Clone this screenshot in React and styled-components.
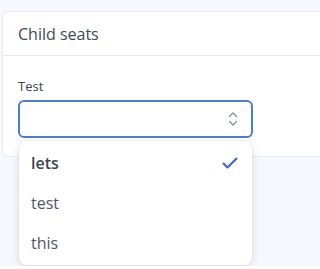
import React from "react";
import styled, { createGlobalStyle } from "styled-components";

const GlobalStyle = createGlobalStyle`
  html, body {
    margin: 0;
    padding: 0;
    background: #ffffff;
    overflow: hidden;
  }
  body {
    font-family: "Open Sans", "Noto Sans", sans-serif;
  }
`;

const options = ["lets", "test", "this"];

const App = () => (
  <>
    <GlobalStyle />
    <Page>
      <Card>
        <CardHeader>Child seats</CardHeader>
        <CardBody>
          <Label>Test</Label>
          <SelectWrap>
            <SelectBox>
              <svg width="10" height="16" viewBox="0 0 10 16" fill="none">
                <path d="M1.5 5.5 L5 2 L8.5 5.5" stroke="#8a929c" strokeWidth="1.4" strokeLinecap="round" strokeLinejoin="round" />
                <path d="M1.5 10.5 L5 14 L8.5 10.5" stroke="#8a929c" strokeWidth="1.4" strokeLinecap="round" strokeLinejoin="round" />
              </svg>
            </SelectBox>
            <Menu>
              {options.map((opt, i) => (
                <Option key={opt} selected={i === 0}>
                  {opt}
                  {i === 0 && (
                    <svg width="16" height="12" viewBox="0 0 16 12" fill="none">
                      <path d="M1.5 6.5 L5.5 10.5 L14.5 1.5" stroke="#3b63c9" strokeWidth="2" strokeLinecap="round" strokeLinejoin="round" />
                    </svg>
                  )}
                </Option>
              ))}
            </Menu>
          </SelectWrap>
        </CardBody>
      </Card>
    </Page>
  </>
);

export default App;

const Page = styled.div`
  background: #f5f8fc;
  height: 266px;
  padding: 11px 0 0 2px;
  box-sizing: border-box;
  overflow: hidden;
`;

const Card = styled.div`
  background: #ffffff;
  border: 1px solid #e8ecf1;
  border-right: none;
  border-radius: 6px 0 0 6px;
  margin-right: -10px;
`;

const CardHeader = styled.div`
  height: 43px;
  display: flex;
  align-items: center;
  padding-left: 15px;
  font-size: 16px;
  color: #3f4957;
  border-bottom: 1px solid #e4e7eb;
`;

const CardBody = styled.div`
  padding: 22px 15px 18px;
`;

const Label = styled.div`
  font-size: 13px;
  color: #3d4550;
  line-height: 16px;
  margin-bottom: 6px;
`;

const SelectWrap = styled.div`
  position: relative;
  width: 235px;
`;

const SelectBox = styled.div`
  height: 38px;
  box-sizing: border-box;
  border: 2px solid #4a7dd8;
  border-radius: 6px;
  display: flex;
  align-items: center;
  justify-content: flex-end;
  padding-right: 13px;
  background: #ffffff;
`;

const Menu = styled.div`
  position: absolute;
  top: 41px;
  left: 1px;
  width: 233px;
  padding: 2px 0;
  background: #ffffff;
  border-radius: 8px;
  box-shadow: 0 2px 8px rgba(40, 60, 90, 0.14), 0 0 0 1px rgba(40, 60, 90, 0.04);
  z-index: 10;
`;

const Option = styled.div`
  height: 40px;
  display: flex;
  align-items: center;
  justify-content: space-between;
  padding: 0 14px 0 12px;
  font-size: 16px;
  color: ${props => (props.selected ? "#3d4550" : "#505864")};
  font-weight: ${props => (props.selected ? 600 : 400)};
`;
